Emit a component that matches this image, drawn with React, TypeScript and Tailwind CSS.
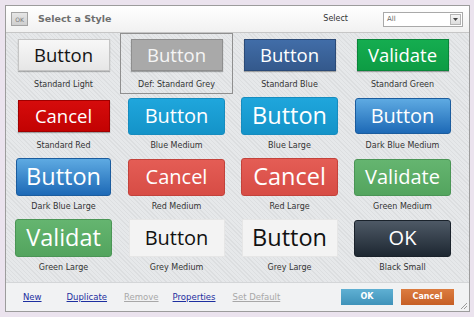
import React from "react";

type Style = {
  label: string;
  text: string;
  size: string;
  look: string;
  selected?: boolean;
};

const styles: Style[] = [
  {
    label: "Standard Light",
    text: "Button",
    size: "w-[92px] h-[32px] text-[18.5px]",
    look: "bg-[linear-gradient(#f7f7f7,#e6e6e6)] border border-[#c4c4c4] text-[#151515] shadow-[0_1px_1px_rgba(0,0,0,0.25)]",
  },
  {
    label: "Def: Standard Grey",
    text: "Button",
    size: "w-[92px] h-[32px] text-[18.5px]",
    look: "bg-[#a9a9a9] border border-[#8e8e8e] text-[#f5f5f5] shadow-[0_1px_1px_rgba(0,0,0,0.3)]",
    selected: true,
  },
  {
    label: "Standard Blue",
    text: "Button",
    size: "w-[92px] h-[32px] text-[18.5px]",
    look: "bg-[linear-gradient(#416da8,#34598c)] border border-[#2b4a77] text-white shadow-[0_1px_1px_rgba(0,0,0,0.3)]",
  },
  {
    label: "Standard Green",
    text: "Validate",
    size: "w-[92px] h-[32px] text-[18.5px]",
    look: "bg-[linear-gradient(#15ad50,#0d9c44)] border border-[#0a853a] text-white shadow-[0_1px_1px_rgba(0,0,0,0.3)]",
  },
  {
    label: "Standard Red",
    text: "Cancel",
    size: "w-[92px] h-[32px] text-[18.5px]",
    look: "bg-[linear-gradient(#d60c0c,#c20202)] border border-[#a00000] text-white shadow-[0_1px_1px_rgba(0,0,0,0.3)]",
  },
  {
    label: "Blue Medium",
    text: "Button",
    size: "w-[97px] h-[37px] text-[20px]",
    look: "rounded-[3px] bg-[linear-gradient(#1fa6dc,#1493c8)] border border-[#168cbf] text-white",
  },
  {
    label: "Blue Large",
    text: "Button",
    size: "w-[97px] h-[38px] text-[23.5px]",
    look: "rounded-[3px] bg-[linear-gradient(#1fa6dc,#1493c8)] border border-[#168cbf] text-white",
  },
  {
    label: "Dark Blue Medium",
    text: "Button",
    size: "w-[96px] h-[36px] text-[20px]",
    look: "rounded-[3px] bg-[linear-gradient(#5eaae2,#1d69b6)] border border-[#1b5c9e] text-white",
  },
  {
    label: "Dark Blue Large",
    text: "Button",
    size: "w-[95px] h-[38px] text-[23.5px]",
    look: "rounded-[3px] bg-[linear-gradient(#5eaae2,#1d69b6)] border border-[#1b5c9e] text-white",
  },
  {
    label: "Red Medium",
    text: "Cancel",
    size: "w-[97px] h-[37px] text-[20px]",
    look: "rounded-[3px] bg-[linear-gradient(#e45d55,#d74c45)] border border-[#c3423b] text-white",
  },
  {
    label: "Red Large",
    text: "Cancel",
    size: "w-[97px] h-[38px] text-[23.5px]",
    look: "rounded-[3px] bg-[linear-gradient(#e45d55,#d74c45)] border border-[#c3423b] text-white",
  },
  {
    label: "Green Medium",
    text: "Validate",
    size: "w-[97px] h-[37px] text-[20px]",
    look: "rounded-[3px] bg-[linear-gradient(#65b570,#53a45e)] border border-[#4a9555] text-white",
  },
  {
    label: "Green Large",
    text: "Validat",
    size: "w-[97px] h-[38px] text-[23.5px]",
    look: "rounded-[3px] bg-[linear-gradient(#65b570,#53a45e)] border border-[#4a9555] text-white",
  },
  {
    label: "Grey Medium",
    text: "Button",
    size: "w-[96px] h-[38px] text-[20px]",
    look: "bg-[#f3f3f3] border border-[#e6e6e6] text-[#111]",
  },
  {
    label: "Grey Large",
    text: "Button",
    size: "w-[96px] h-[38px] text-[23.5px]",
    look: "bg-[#f3f3f3] border border-[#e6e6e6] text-[#111]",
  },
  {
    label: "Black Small",
    text: "OK",
    size: "w-[97px] h-[37px] text-[20px]",
    look: "rounded-[3px] bg-[linear-gradient(#4e5966,#1d2731)] border border-[#1a222b] text-white",
  },
];

function StyleCell({ s }: { s: Style }) {
  return (
    <div
      className={
        s.selected
          ? "h-[61px] flex flex-col items-center border border-[#8f8f8f]"
          : "h-[61px] flex flex-col items-center border border-transparent"
      }
    >
      <div className="h-[42px] flex items-center justify-center">
        <div
          className={`flex items-center justify-center overflow-hidden whitespace-nowrap font-['Open_Sans',sans-serif] leading-none ${s.size} ${s.look}`}
        >
          {s.text}
        </div>
      </div>
      <div className="h-[17px] flex items-center text-[8px] text-[#333] font-['DejaVu_Sans',sans-serif]">
        {s.label}
      </div>
    </div>
  );
}

export default function App() {
  return (
    <div className="w-[474px] h-[317px] bg-[#ebe3ee] pl-[5px] pt-[5px] font-['DejaVu_Sans',sans-serif]">
      <div className="relative w-[465px] h-[307px] border border-[#9c9c9c] bg-white flex flex-col">
        {/* header */}
        <div className="h-[27px] shrink-0 flex items-center border-b border-[#c6c6c6] bg-[linear-gradient(#ffffff,#f1f1f1)] pl-[5px] pr-[6px]">
          <div className="w-[17px] h-[14px] flex items-center justify-center border border-[#a3a3a3] bg-[linear-gradient(#e6e6e6,#cfcfcf)] text-[6px] text-[#777]">
            OK
          </div>
          <div className="ml-[10px] text-[9.5px] font-bold text-[#6f6f6f]">Select a Style</div>
          <div className="ml-auto text-[8px] text-[#333]">Select</div>
          <div className="ml-[35px] w-[80px] h-[15px] flex items-center border border-[#a9a9a9] bg-white">
            <span className="pl-[3px] text-[7px] text-[#666] flex-1">All</span>
            <span className="w-[11px] h-[11px] mr-[1px] flex items-center justify-center border border-[#b4b4b4] bg-[linear-gradient(#f4f4f4,#dedede)]">
              <svg width="5" height="3" viewBox="0 0 5 3">
                <path d="M0 0h5L2.5 3z" fill="#444" />
              </svg>
            </span>
          </div>
        </div>

        {/* grid */}
        <div className="flex-1 bg-[repeating-linear-gradient(45deg,#e6e8ea_0px,#e6e8ea_2px,#dcdee0_2px,#dcdee0_3px)] pl-[1px]">
          <div className="grid grid-cols-[repeat(4,113px)]">
            {styles.map((s) => (
              <StyleCell key={s.label} s={s} />
            ))}
          </div>
        </div>

        {/* footer */}
        <div className="h-[29px] shrink-0 flex items-center border-t border-[#d4d6d8] bg-[#f1f2f3] pl-[17px] pr-[15px] text-[8.5px]">
          <span className="underline text-[#1d2fa0]">New</span>
          <span className="ml-[25px] underline text-[#1d2fa0]">Duplicate</span>
          <span className="ml-[17px] underline text-[#a8a8a8]">Remove</span>
          <span className="ml-[14px] underline text-[#1d2fa0]">Properties</span>
          <span className="ml-[17px] underline text-[#a8a8a8]">Set Default</span>
          <div className="ml-auto w-[52px] h-[16px] flex items-center justify-center bg-[linear-gradient(#5fb0d3,#3f92b9)] text-[8px] font-bold text-white">
            OK
          </div>
          <div className="ml-[8px] w-[53px] h-[16px] flex items-center justify-center bg-[linear-gradient(#dc7c40,#c65f25)] text-[8px] font-bold text-white">
            Cancel
          </div>
        </div>

        <svg className="absolute right-[1px] bottom-[1px]" width="9" height="9" viewBox="0 0 9 9">
          <path d="M8 2L2 8M8 5L5 8" stroke="#9a9a9a" strokeWidth="1" />
        </svg>
      </div>
    </div>
  );
}
